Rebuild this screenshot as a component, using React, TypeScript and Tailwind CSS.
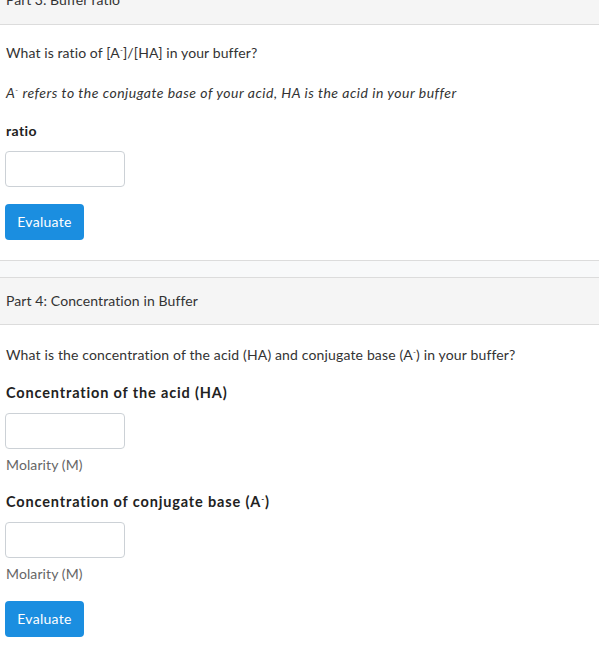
import React from "react";

const font = { fontFamily: "Lato, 'Open Sans', sans-serif" };

function Input({ className = "" }: { className?: string }) {
  return <div className={"ml-[5px] w-[120px] h-[36px] border border-[#ccd1d6] rounded-[4px] bg-white " + className} />;
}

function Btn({ className = "" }: { className?: string }) {
  return (
    <div className={"ml-[5px] " + className}>
      <button className="w-[79px] h-[36px] rounded-[4px] bg-[#1b8ee0] text-white text-[14px] tracking-[0.3px] flex items-center justify-center">
        Evaluate
      </button>
    </div>
  );
}

const Sup = () => <sup className="text-[8px] -top-[0.6em]">-</sup>;

export default function App() {
  return (
    <div className="w-[599px] h-[653px] bg-white text-[#333] text-[14px] leading-[20px] overflow-hidden" style={font}>
      <div className="h-[25px] bg-[#f5f5f5] border-b border-[#dcdcdc] px-[6px] overflow-hidden">
        <div className="-mt-[10px] h-[20px]">Part 3: Buffer ratio</div>
      </div>
      <div className="px-[6px] mt-[18px] h-[20px] tracking-[0.1px]">What is ratio of [A<Sup />]/[HA] in your buffer?</div>
      <div className="px-[6px] mt-[20px] h-[20px] italic tracking-[0.5px]">
        A<Sup /> refers to the conjugate base of your acid, HA is the acid in your buffer
      </div>
      <div className="px-[6px] mt-[18px] h-[20px] font-bold text-[#222] tracking-[0.4px]">ratio</div>
      <Input className="mt-[10px]" />
      <Btn className="mt-[17px]" />
      <div className="mt-[20px] h-[17px] border-t border-[#dcdcdc] bg-[#f8f9fa]" />
      <div className="h-[48px] bg-[#f5f5f5] border-t border-b border-[#dcdcdc] px-[6px] flex items-center tracking-[0.1px]">
        Part 4: Concentration in Buffer
      </div>
      <div className="px-[6px] mt-[20px] h-[20px] tracking-[0.15px]">
        What is the concentration of the acid (HA) and conjugate base (A<Sup />) in your buffer?
      </div>
      <div className="px-[6px] mt-[18px] h-[20px] font-bold text-[#222] text-[14.5px] tracking-[0.85px]">Concentration of the acid (HA)</div>
      <Input className="mt-[10px]" />
      <div className="px-[6px] mt-[6px] h-[20px] text-[#666] tracking-[0.1px]">Molarity (M)</div>
      <div className="px-[6px] mt-[17px] h-[20px] font-bold text-[#222] text-[14.5px] tracking-[0.85px]">
        Concentration of conjugate base (A<Sup />)
      </div>
      <Input className="mt-[10px]" />
      <div className="px-[6px] mt-[6px] h-[20px] text-[#666] tracking-[0.1px]">Molarity (M)</div>
      <Btn className="mt-[17px]" />
    </div>
  );
}
